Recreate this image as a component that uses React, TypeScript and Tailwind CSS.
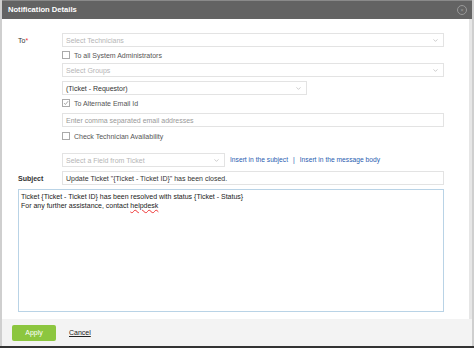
import { ChevronDown } from "lucide-react";

const FONT = { fontFamily: '"Liberation Sans", Arial, sans-serif' };

function Select({ text, placeholder, className }: { text: string; placeholder?: boolean; className: string }) {
  return (
    <div
      className={`flex h-[14px] items-center justify-between border border-[#e3e3e3] bg-white pl-[3px] pr-[4px] ${className}`}
    >
      <span className={placeholder ? "text-[#b5b5b5]" : "text-[#333]"}>{text}</span>
      <ChevronDown className="h-[7px] w-[7px] text-[#aaa]" strokeWidth={2} />
    </div>
  );
}

function Check({ label, checked }: { label: string; checked?: boolean }) {
  return (
    <div className="flex h-[10px] items-center gap-[4px] text-[#555]">
      <span className="flex h-[8px] w-[8px] items-center justify-center border border-[#aaa] bg-white">
        {checked && (
          <svg viewBox="0 0 8 8" className="h-[8px] w-[8px]">
            <path d="M1.5 4.2 L3.2 6 L6.8 1.6" fill="none" stroke="#888" strokeWidth="1" />
          </svg>
        )}
      </span>
      <span>{label}</span>
    </div>
  );
}

export default function App() {
  return (
    <div style={FONT} className="flex h-[348px] w-[474px] flex-col bg-[#cfcfcf] text-[7px] leading-none">
      <div className="mx-[2px] flex flex-1 flex-col overflow-hidden bg-white">
        <div className="flex h-[19px] items-center justify-between border-t border-[#8a8a8a] bg-[#636363] pl-[6px] pr-[5px]">
          <span className="text-[7.6px] font-bold text-white">Notification Details</span>
          <span className="flex h-[10px] w-[10px] items-center justify-center rounded-full border border-[#999] text-[6px] text-[#999]">
            ×
          </span>
        </div>

        <div className="flex flex-1 border-r-[3px] border-[#e6e6e6]">
          <div className="flex flex-1 flex-col pl-[16px] pr-[25px] pt-[14px]">
            <div className="flex">
              <div className="w-[44px] pt-[4px] text-[#333]">
                To<span className="text-[#e33]">*</span>
              </div>
              <div className="flex flex-1 flex-col">
                <Select text="Select Technicians" placeholder className="w-full" />
                <div className="mt-[3px]">
                  <Check label="To all System Administrators" />
                </div>
                <Select text="Select Groups" placeholder className="mt-[3px] w-full" />
                <Select text="(Ticket - Requestor)" className="mt-[4px] w-[245px]" />
                <div className="mt-[3px]">
                  <Check label="To Alternate Email Id" checked />
                </div>
                <div className="mt-[5px] flex h-[14px] items-center border border-[#e3e3e3] pl-[3px] text-[#999]">
                  Enter comma separated email addresses
                </div>
                <div className="mt-[4px]">
                  <Check label="Check Technician Availability" />
                </div>
                <div className="mt-[12px] flex items-center gap-[5px]">
                  <Select text="Select a Field from Ticket" placeholder className="w-[163px] bg-[#f7f7f7]" />
                  <span className="text-[6.7px] text-[#2a5db0]">Insert in the subject</span>
                  <span className="text-[6.7px] text-[#2a5db0]">|</span>
                  <span className="text-[6.7px] text-[#2a5db0]">Insert in the message body</span>
                </div>
              </div>
            </div>

            <div className="mt-[4px] flex items-center">
              <div className="w-[44px] font-bold text-[#333]">Subject</div>
              <div className="flex h-[14px] flex-1 items-center border border-[#e3e3e3] pl-[3px] text-[#333]">
                Update Ticket "{"{"}Ticket - Ticket ID{"}"}" has been closed.
              </div>
            </div>

            <div className="mt-[4px] h-[123px] border border-[#b9d3e6] px-[2px] pt-[3px] leading-[8.5px] text-[#222]">
              <div>Ticket {"{"}Ticket - Ticket ID{"}"} has been resolved with status {"{"}Ticket - Status{"}"}</div>
              <div>
                For any further assistance, contact{" "}
                <span className="underline decoration-[#e33] decoration-wavy">helpdesk</span>
              </div>
            </div>
          </div>
        </div>

        <div className="flex h-[27px] items-center gap-[13px] bg-[#f3f3f3] pl-[10px]">
          <button className="h-[16px] w-[44px] rounded-[2px] bg-[#8cc63f] text-[7px] text-white">Apply</button>
          <span className="text-[#222] underline">Cancel</span>
        </div>
      </div>
      <div className="h-[2px] bg-[#333]" />
    </div>
  );
}
